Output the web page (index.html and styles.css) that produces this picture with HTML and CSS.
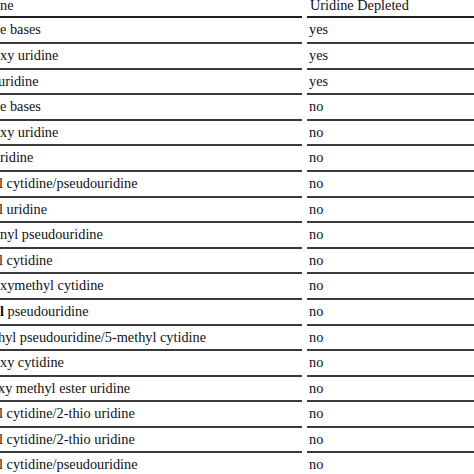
FILE: index.html
```html
<!DOCTYPE html>
<html>
<head>
<meta charset="utf-8">
<link rel="stylesheet" href="styles.css">
</head>
<body>
<div class="table">
  <div class="cell head name">ne</div>
  <div class="cell head val">Uridine Depleted</div>

  <div class="cell name">e bases</div><div class="cell val">yes</div>
  <div class="cell name">xy uridine</div><div class="cell val">yes</div>
  <div class="cell name"><span class="cut2">uridine</span></div><div class="cell val">yes</div>
  <div class="cell name">e bases</div><div class="cell val">no</div>
  <div class="cell name">xy uridine</div><div class="cell val">no</div>
  <div class="cell name">ridine</div><div class="cell val">no</div>
  <div class="cell name"><span class="cut1">l cytidine/pseudouridine</span></div><div class="cell val">no</div>
  <div class="cell name"><span class="cut1">l uridine</span></div><div class="cell val">no</div>
  <div class="cell name">nyl pseudouridine</div><div class="cell val">no</div>
  <div class="cell name"><span class="cut1">l cytidine</span></div><div class="cell val">no</div>
  <div class="cell name">xymethyl cytidine</div><div class="cell val">no</div>
  <div class="cell name"><span class="bold-l">l</span> pseudouridine</div><div class="cell val">no</div>
  <div class="cell name"><span class="cut2">hyl pseudouridine/5-methyl cytidine</span></div><div class="cell val">no</div>
  <div class="cell name">xy cytidine</div><div class="cell val">no</div>
  <div class="cell name"><span class="cut2">xy methyl ester uridine</span></div><div class="cell val">no</div>
  <div class="cell name"><span class="cut1">l cytidine/2-thio uridine</span></div><div class="cell val">no</div>
  <div class="cell name"><span class="cut1">l cytidine/2-thio uridine</span></div><div class="cell val">no</div>
  <div class="cell name"><span class="cut1">l cytidine/pseudouridine</span></div><div class="cell val">no</div>
</div>
</body>
</html>
```
FILE: styles.css
```css
html, body {
  margin: 0;
  padding: 0;
  background: #ffffff;
  overflow: hidden;
}
body {
  width: 474px;
  height: 474px;
  font-family: "Liberation Serif", "Times New Roman", serif;
  font-size: 14.3px;
  color: #111111;
}
.table {
  display: grid;
  grid-template-columns: 302px 1fr;
  column-gap: 5px;
}
.cell {
  height: 23.6px;
  line-height: 23.6px;
  border-bottom: 2px solid #3a3a3a;
  white-space: nowrap;
  overflow: hidden;
}
.cell.head {
  height: 16.4px;
  line-height: 10px;
  border-bottom: 2px solid #1e1e1e;
  overflow: visible;
}
.val {
  padding-left: 2px;
}
.head.val {
  padding-left: 3px;
}
.cut1 {
  display: inline-block;
  margin-left: -1px;
}
.cut2 {
  display: inline-block;
  margin-left: -2px;
}
.bold-l {
  font-weight: bold;
}
```
